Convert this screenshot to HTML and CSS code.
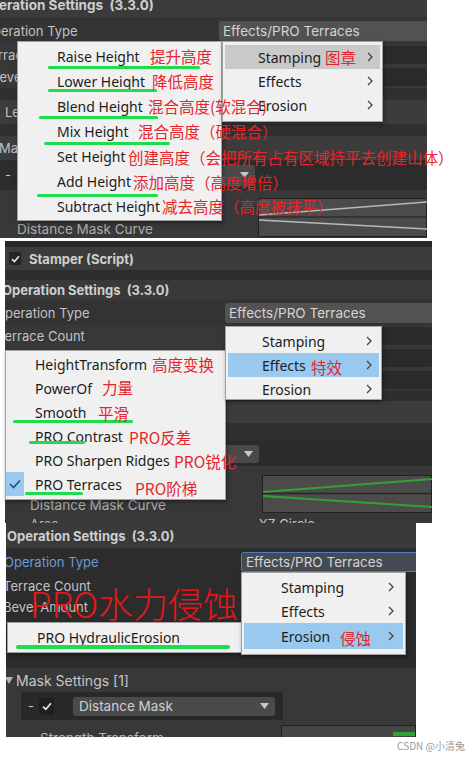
FILE: index.html
```html
<!DOCTYPE html>
<html lang="zh">
<head>
<meta charset="utf-8">
<title>Stamper operation types</title>
<link rel="stylesheet" href="styles.css">
</head>
<body>
<div class="page">

  <section class="panel p1">
    <div class="row hdr p1-title"><span class="bold cut20">Operation Settings&nbsp;&nbsp;(3.3.0)</span></div>
    <div class="row p1-type"><div class="lc"><span class="cut17">Operation Type</span></div><div class="dd">Effects/PRO Terraces</div></div>
    <div class="row p1-f"><span class="cut17">Terrace Count</span><div class="inp"></div></div>
    <div class="row p1-f"><span class="cut9">Bevel Amount</span><div class="inp"></div></div>
    <div class="row gap12"></div>
    <div class="row hdr h24"><span class="ind5">Levels</span></div>
    <div class="row gap12"></div>
    <div class="row hdr h24"><span class="cut1">Mask Settings [1]</span></div>
    <div class="row maskrow"><span class="dash">-</span><div class="dd2"><span>Distance Mask</span><svg class="tri" width="9" height="6" viewBox="0 0 9 6"><path d="M0 0H9L4.5 6Z" fill="#c8c8c8"/></svg></div></div>
    <div class="row curverow">
      <span class="clabel">Distance Mask Curve</span>
      <svg class="curve" width="169" height="39" viewBox="0 0 169 39">
        <rect x="0.5" y="0.5" width="168" height="38" fill="#4b4b4b" stroke="#222"/>
        <line x1="1" y1="19" x2="168" y2="19" stroke="#2c2c2c" stroke-width="1.5"/>
        <polyline points="1,17 169,4" fill="none" stroke="#b9b9b9" stroke-width="1.6"/>
        <polyline points="1,22 169,31" fill="none" stroke="#b9b9b9" stroke-width="1.6"/>
      </svg>
    </div>
  </section>

  <section class="panel p2">
    <div class="row strip6"></div>
    <div class="row hdr p2-head"><span class="cb"><svg width="9" height="8" viewBox="0 0 9 8"><path d="M1 4.2L3.4 6.5L8 1.2" fill="none" stroke="#e6e6e6" stroke-width="1.6"/></svg></span><span class="bold hname">Stamper (Script)</span></div>
    <div class="row gap10"></div>
    <div class="row hdr p2-title"><span class="bold cut3">Operation Settings&nbsp;&nbsp;(3.3.0)</span></div>
    <div class="row p2-type"><div class="lc"><span class="cut10">Operation Type</span></div><div class="dd">Effects/PRO Terraces</div></div>
    <div class="row p2-f"><span class="cut8">Terrace Count</span><div class="inp"></div></div>
    <div class="row p2-f"><span>Bevel Amount</span><div class="inp"></div></div>
    <div class="row p2-f"><span>Terrace Offset</span><div class="inp"></div></div>
    <div class="row gap10"></div>
    <div class="row hdr p2-f"><span>Mask Settings [1]</span></div>
    <div class="row p2-gap"></div>
    <div class="row maskrow p2-mask"><span class="dash">-</span><div class="dd2"><span>Distance Mask</span><svg class="tri" width="9" height="6" viewBox="0 0 9 6"><path d="M0 0H9L4.5 6Z" fill="#c8c8c8"/></svg></div></div>
    <div class="row curverow p2-curve">
      <span class="clabel">Distance Mask Curve</span>
      <svg class="curve" width="170" height="38" viewBox="0 0 170 38">
        <rect x="0.5" y="0.5" width="169" height="37" fill="#4b4b4b" stroke="#222"/>
        <line x1="1" y1="18.5" x2="169" y2="18.5" stroke="#262626" stroke-width="1.5"/>
        <polyline points="1,17 170,4" fill="none" stroke="#2fa236" stroke-width="1.8"/>
        <polyline points="1,21 170,32" fill="none" stroke="#2fa236" stroke-width="1.8"/>
      </svg>
    </div>
    <div class="row p2-area"><span class="area-l">Area</span><span class="area-v">XZ Circle</span></div>
  </section>

  <section class="panel p3">
    <div class="row hdr p3-title"><span class="bold">Operation Settings&nbsp;&nbsp;(3.3.0)</span></div>
    <div class="p3-body">
      <div class="row p3-type"><div class="lc"><span class="cut2 blue">Operation Type</span></div><div class="dd dd-focus">Effects/PRO Terraces</div></div>
      <div class="row p3-f1"><span class="cut3">Terrace Count</span></div>
      <div class="row p3-f2"><span class="cut3">Bevel Amount</span></div>
    </div>
    <div class="row hdr p3-mask"><svg class="fold" width="8" height="7" viewBox="0 0 8 7"><path d="M0 0H8L4 7Z" fill="#b5b5b5"/></svg><span>Mask Settings [1]</span></div>
    <div class="row p3-maskrow">
      <div class="handle"></div>
      <div class="mrow-dark"><span class="dash">-</span><span class="cb cb2"><svg width="10" height="9" viewBox="0 0 10 9"><path d="M1 4.6L3.8 7.3L9 1.3" fill="none" stroke="#eaeaea" stroke-width="1.7"/></svg></span><div class="dd2 dd3"><span>Distance Mask</span><svg class="tri" width="9" height="6" viewBox="0 0 9 6"><path d="M0 0H9L4.5 6Z" fill="#c8c8c8"/></svg></div></div>
    </div>
    <div class="row p3-str"><span class="str-l">Strength Transform</span><div class="str-box"><span class="str-g"></span></div></div>
  </section>

  <!-- popup menus -->
  <div class="menu m1a">
    <div class="mi">Raise Height</div>
    <div class="mi">Lower Height</div>
    <div class="mi">Blend Height</div>
    <div class="mi">Mix Height</div>
    <div class="mi">Set Height</div>
    <div class="mi">Add Height</div>
    <div class="mi">Subtract Height</div>
  </div>
  <div class="menu m1b">
    <div class="mi hl-grey">Stamping<svg class="chev" width="6" height="10" viewBox="0 0 6 10"><path d="M1 1L5 5L1 9" fill="none" stroke="#444" stroke-width="1.3"/></svg></div>
    <div class="mi">Effects<svg class="chev" width="6" height="10" viewBox="0 0 6 10"><path d="M1 1L5 5L1 9" fill="none" stroke="#444" stroke-width="1.3"/></svg></div>
    <div class="mi">Erosion<svg class="chev" width="6" height="10" viewBox="0 0 6 10"><path d="M1 1L5 5L1 9" fill="none" stroke="#444" stroke-width="1.3"/></svg></div>
  </div>

  <div class="menu m2a">
    <div class="mi">HeightTransform</div>
    <div class="mi">PowerOf</div>
    <div class="mi">Smooth</div>
    <div class="mi">PRO Contrast</div>
    <div class="mi">PRO Sharpen Ridges</div>
    <div class="mi checked"><span class="ck"><svg width="12" height="10" viewBox="0 0 12 10"><path d="M1 5L4.5 8.5L11 1.5" fill="none" stroke="#1f4f86" stroke-width="1.6"/></svg></span><span class="ct">PRO Terraces</span></div>
  </div>
  <div class="menu m2b">
    <div class="mi">Stamping<svg class="chev" width="6" height="10" viewBox="0 0 6 10"><path d="M1 1L5 5L1 9" fill="none" stroke="#444" stroke-width="1.3"/></svg></div>
    <div class="mi hl-blue">Effects<svg class="chev" width="6" height="10" viewBox="0 0 6 10"><path d="M1 1L5 5L1 9" fill="none" stroke="#444" stroke-width="1.3"/></svg></div>
    <div class="mi">Erosion<svg class="chev" width="6" height="10" viewBox="0 0 6 10"><path d="M1 1L5 5L1 9" fill="none" stroke="#444" stroke-width="1.3"/></svg></div>
  </div>

  <div class="menu m3a">
    <div class="mi">PRO HydraulicErosion</div>
  </div>
  <div class="menu m3b">
    <div class="mi">Stamping<svg class="chev" width="6" height="10" viewBox="0 0 6 10"><path d="M1 1L5 5L1 9" fill="none" stroke="#444" stroke-width="1.3"/></svg></div>
    <div class="mi">Effects<svg class="chev" width="6" height="10" viewBox="0 0 6 10"><path d="M1 1L5 5L1 9" fill="none" stroke="#444" stroke-width="1.3"/></svg></div>
    <div class="mi hl-blue tall">Erosion<svg class="chev" width="6" height="10" viewBox="0 0 6 10"><path d="M1 1L5 5L1 9" fill="none" stroke="#444" stroke-width="1.3"/></svg></div>
  </div>

  <!-- green underlines -->
  <span class="ul u1"></span><span class="ul u2"></span><span class="ul u3"></span><span class="ul u4"></span><span class="ul u5"></span>
  <span class="ul u6"></span><span class="ul u7"></span><span class="ul u8"></span><span class="ul u9"></span>

  <!-- red annotations -->
  <span class="ann a1">提升高度</span>
  <span class="ann a2">降低高度</span>
  <span class="ann a3">混合高度(软混合)</span>
  <span class="ann a4">混合高度（硬混合）</span>
  <span class="ann a5">创建高度（会把所有占有区域持平去创建山体）</span>
  <span class="ann a6">添加高度（高度增倍）</span>
  <span class="ann a7">减去高度（高度被抹平）</span>
  <span class="ann a8">图章</span>
  <span class="ann b1">特效</span>
  <span class="ann b2">高度变换</span>
  <span class="ann b3">力量</span>
  <span class="ann b4">平滑</span>
  <span class="ann b5">PRO反差</span>
  <span class="ann b6">PRO锐化</span>
  <span class="ann b7">PRO阶梯</span>
  <span class="ann c1">侵蚀</span>
  <span class="ann big">PRO水力侵蚀</span>

  <div class="watermark">CSDN @小清兔</div>
</div>
</body>
</html>
```

FILE: styles.css
```css
* { box-sizing: border-box; margin: 0; padding: 0; }
html, body { background: #fff; }
body { margin: 0; width: 474px; height: 758px; overflow: hidden; font-family: Inter, "Noto Sans", sans-serif; }
.page { position: relative; width: 474px; height: 758px; }

.panel { position: relative; overflow: hidden; display: flex; flex-direction: column; background: #383838; color: #c2c2c2; font-size: 13px; }
.p1 { width: 427px; height: 238px; }
.p2 { width: 427px; height: 282px; margin: 3px 0 0 5px; }
.p3 { width: 410px; height: 214px; margin-left: 6px; background: #2c2c2c; }

.row { display: flex; align-items: center; flex: none; white-space: nowrap; }
.hdr { background: #3c3c3c; }
.bold { font-weight: 700; color: #cfcfcf; }
.lc { flex: none; overflow: visible; }
.dd { flex: 1; height: 20px; margin-right: -4px; background: #525252; border-radius: 3px; color: #d4d4d4; font-size: 13.5px; padding-left: 4px; display: flex; align-items: center; }
.inp { margin-left: auto; width: 169px; height: 18px; background: #2a2a2a; border-radius: 2px; }

.cut1 { margin-left: -1px; }
.cut2 { margin-left: -2px; }
.cut3 { margin-left: -3px; }
.cut8 { margin-left: -8px; }
.cut9 { margin-left: -9px; }
.cut10 { margin-left: -10px; }
.cut17 { margin-left: -17px; }
.cut20 { margin-left: -20px; }
.ind5 { margin-left: 5px; }

/* panel 1 */
.p1-title { height: 17px; align-items: flex-start; line-height: 10px; font-size: 13.5px; background: #3b3b3b; }
.p1-type { height: 27px; background: #343434; }
.p1-type .lc { width: 219px; }
.p1-f { height: 22px; }
.gap12 { height: 12px; background: #2f2f2f; }
.gap10 { height: 10px; background: #2e2e2e; }
.h24 { height: 24px; }
.maskrow { height: 30px; background: #2c2c2c; }
.dash { margin-left: 5px; width: 10px; color: #c8c8c8; }
.dd2 { margin-left: 60px; width: 180px; height: 21px; background: #4a4a4a; border-radius: 3px; display: flex; align-items: center; padding: 0 6px; color: #d0d0d0; font-size: 13.5px; }
.dd2 .tri { margin-left: auto; }
.curverow { height: 48px; align-items: flex-start; }
.clabel { margin: 31px 0 0 17px; line-height: 16px; color: #ababab; font-size: 13.5px; }
.curve { margin: 8px 0 0 auto; display: block; }

/* panel 2 */
.strip6 { height: 6px; background: #272727; }
.p2-head { height: 23px; }
.cb { width: 12px; height: 13px; margin-left: 4px; background: #242424; border-radius: 2px; display: flex; align-items: center; justify-content: center; }
.hname { margin-left: 8px; }
.p2-title { height: 20px; background: #393939; }
.p2-type { height: 25px; background: #333; }
.p2-type .lc { width: 220px; }
.p2-f { height: 22px; }
.p2-gap { height: 18px; background: #303030; }
.p2-mask { height: 25px; background: #2b2b2b; }
.p2-mask .dd2 { margin-left: 56px; width: 183px; height: 18px; }
.p2-curve { height: 50px; }
.p2-curve .clabel { margin: 31px 0 0 25px; }
.p2-curve .curve { margin-top: 9px; }
.p2-area { height: 7px; align-items: flex-start; overflow: visible; }
.area-l { margin: 0 0 0 25px; line-height: 16px; color: #b5b5b5; }
.area-v { margin-left: 200px; line-height: 16px; color: #c5c5c5; }

/* panel 3 */
.p3-title { height: 25px; background: #3a3a3a; }
.p3-title .bold { margin-left: 1px; }
.p3-body { display: flex; flex-direction: column; height: 120px; background: #2c2c2c; }
.p3-type { height: 28px; }
.p3-type .lc { width: 235px; }
.blue { color: #6e9ad2; }
.dd-focus { background: #464b53; border: 1px solid #4c80c2; margin-right: -4px; }
.p3-f1 { height: 20px; }
.p3-f2 { height: 22px; }
.p3-mask { height: 24px; background: #383838; color: #c6c6c6; font-size: 14px; }
.fold { margin-left: -1px; margin-right: 3px; }
.p3-maskrow { height: 28px; background: #383838; align-items: stretch; }
.handle { width: 15px; }
.mrow-dark { width: 262px; background: #292929; display: flex; align-items: center; }
.mrow-dark .dash { margin-left: 7px; width: 11px; }
.cb2 { width: 15px; height: 17px; margin-left: 0; background: #1f1f1f; }
.dd3 { margin-left: 19px; width: 202px; height: 19px; }
.p3-str { height: 17px; background: #383838; align-items: flex-start; overflow: visible; }
.str-l { margin: 10px 0 0 34px; color: #b5b5b5; font-size: 13.5px; }
.str-box { margin: 5px 0 0 auto; width: 135px; height: 20px; background: #454545; border: 1px solid #222; position: relative; }
.str-g { display: block; position: absolute; right: 0; top: 6px; width: 22px; height: 4px; background: #2fa236; }

/* menus */
.menu { position: absolute; background: #f0f0f0; border: 1px solid #a2a2a2; box-shadow: 1px 2px 4px rgba(0,0,0,.4); font-family: "Noto Sans", "Open Sans", sans-serif; font-size: 14px; color: #1c1c1c; display: flex; flex-direction: column; }
.mi { display: flex; align-items: center; white-space: nowrap; flex: none; }
.chev { margin-left: auto; flex: none; }
.hl-grey { background: #c9c9c9; }
.hl-blue { background: #99c9ef; }

.m1a { left: 17px; top: 41px; width: 205px; height: 180px; padding-top: 2px; }
.m1a .mi { height: 25px; padding-left: 39px; }
.m1b { left: 222px; top: 41px; width: 161px; height: 81px; padding: 3px 2px; }
.m1b .mi { height: 24px; padding-left: 33px; padding-right: 7px; }

.m2a { left: 5px; top: 350px; width: 221px; height: 150px; padding-top: 1px; }
.m2a .mi { height: 24px; padding-left: 29px; }
.m2a .mi.checked { padding-left: 0; }
.ck { width: 18px; height: 24px; background: #99c9ef; display: flex; align-items: center; justify-content: center; }
.ct { margin-left: 11px; }
.m2b { left: 225px; top: 326px; width: 157px; height: 74px; padding: 2px 2px; }
.m2b .mi { height: 24px; padding-left: 34px; padding-right: 7px; }

.m3a { left: 7px; top: 622px; width: 236px; height: 31px; }
.m3a .mi { height: 29px; padding-left: 29px; }
.m3b { left: 241px; top: 572px; width: 165px; height: 83px; padding: 2px 2px; }
.m3b .mi { height: 24px; padding-left: 37px; padding-right: 9px; }
.m3b .mi.tall { height: 26px; }

/* underlines */
.ul { position: absolute; height: 3px; background: #1fdc4e; border-radius: 2px; }
.u1 { left: 48px; top: 66px; width: 152px; }
.u2 { left: 48px; top: 89px; width: 109px; }
.u3 { left: 39px; top: 116px; width: 119px; }
.u4 { left: 44px; top: 142px; width: 126px; }
.u5 { left: 37px; top: 194px; width: 121px; }
.u6 { left: 13px; top: 420px; width: 120px; }
.u7 { left: 29px; top: 441px; width: 56px; }
.u8 { left: 25px; top: 492px; width: 58px; }
.u9 { left: 16px; top: 645px; width: 214px; height: 4px; }

/* annotations */
.ann { position: absolute; white-space: nowrap; color: #e4262c; font-family: "Noto Sans CJK SC", "Noto Sans", sans-serif; font-size: 15.5px; line-height: 20px; }
.a1 { left: 150px; top: 46px; }
.a2 { left: 152px; top: 71px; }
.a3 { left: 148px; top: 96px; }
.a4 { left: 138px; top: 121px; }
.a5 { left: 128px; top: 147px; }
.a6 { left: 133px; top: 172px; }
.a7 { left: 162px; top: 196px; }
.a8 { left: 325px; top: 47px; }
.b1 { left: 311px; top: 357px; }
.b2 { left: 152px; top: 354px; }
.b3 { left: 102px; top: 377px; }
.b4 { left: 98px; top: 403px; }
.b5 { left: 129px; top: 427px; }
.b6 { left: 174px; top: 451px; }
.b7 { left: 135px; top: 478px; }
.c1 { left: 340px; top: 628px; }
.big { left: 30px; top: 583px; font-size: 35px; line-height: 40px; font-weight: 300; color: #e8151a; }

.watermark { position: absolute; right: 9px; top: 739px; font-family: "Noto Sans CJK SC", "Noto Sans", sans-serif; font-size: 10px; line-height: 14px; color: #9a9a9a; }
```
